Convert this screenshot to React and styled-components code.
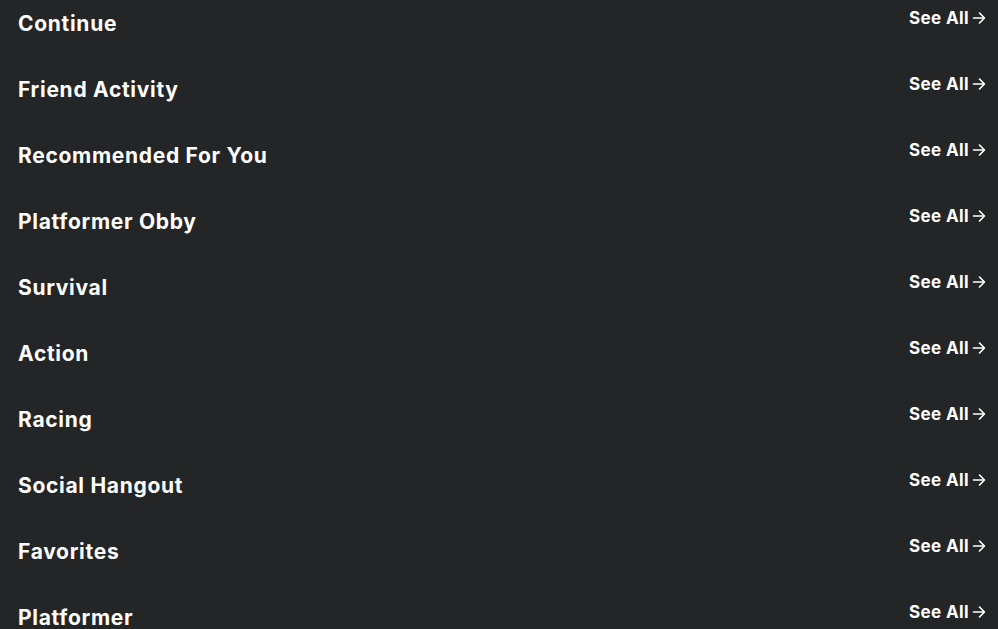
import styled, { createGlobalStyle } from 'styled-components';

const GlobalStyle = createGlobalStyle`
  html, body {
    margin: 0;
    padding: 0;
    background: #232527;
  }
  body {
    font-family: Inter, "Open Sans", sans-serif;
    color: #fff;
    overflow: hidden;
  }
`;

const Page = styled.div`
  display: flex;
  flex-direction: column;
  padding: 0 12px 0 18px;
  height: 629px;
  overflow: hidden;
`;

const Row = styled.div`
  display: flex;
  justify-content: space-between;
  align-items: flex-start;
  height: 66px;
  flex-shrink: 0;
`;

const Title = styled.h2`
  margin: 0;
  padding-top: 10px;
  font-size: 21px;
  line-height: 27px;
  letter-spacing: 0.7px;
  font-weight: 700;
  color: #fff;
`;

const SeeAll = styled.a`
  display: flex;
  align-items: center;
  gap: 3px;
  padding-top: 8px;
  font-size: 17px;
  line-height: 20px;
  letter-spacing: 0.4px;
  font-weight: 700;
  color: #fff;
  text-decoration: none;
  cursor: pointer;
`;

const Arrow = () => (
  <svg width="14" height="14" viewBox="0 0 14 14" fill="none" stroke="#fff" strokeWidth="1.6" strokeLinecap="round" strokeLinejoin="round">
    <path d="M1.5 7h11M7.5 2l5 5-5 5" />
  </svg>
);

const sections = [
  'Continue',
  'Friend Activity',
  'Recommended For You',
  'Platformer Obby',
  'Survival',
  'Action',
  'Racing',
  'Social Hangout',
  'Favorites',
  'Platformer',
];

const App = () => (
  <>
    <GlobalStyle />
    <Page>
      {sections.map((name) => (
        <Row key={name}>
          <Title>{name}</Title>
          <SeeAll>
            See All
            <Arrow />
          </SeeAll>
        </Row>
      ))}
    </Page>
  </>
);

export default App;
